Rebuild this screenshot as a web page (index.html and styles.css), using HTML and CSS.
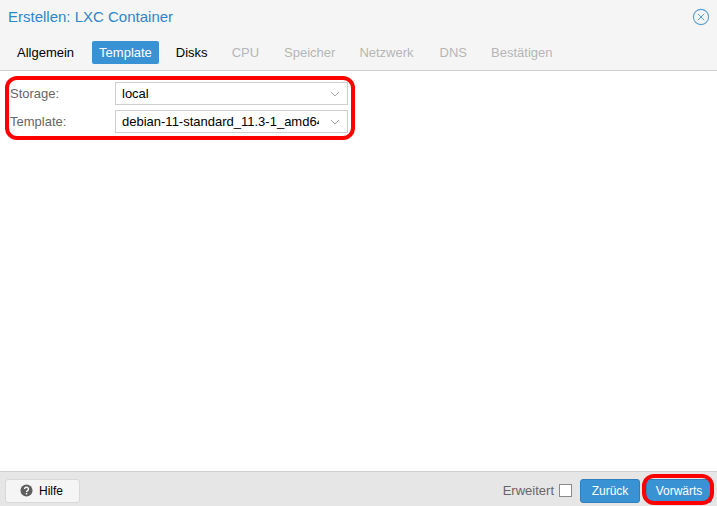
FILE: index.html
```html
<!DOCTYPE html>
<html lang="de">
<head>
<meta charset="utf-8">
<title>Erstellen: LXC Container</title>
<link rel="stylesheet" href="styles.css">
</head>
<body>
<div class="window">
  <header class="head">
    <div class="titlebar">
      <h1 class="title">Erstellen: LXC Container</h1>
      <svg class="close" viewBox="0 0 18 18" width="18" height="18" aria-hidden="true">
        <circle cx="9" cy="9" r="7.6" fill="none" stroke="#5a9fd4" stroke-width="1.1"/>
        <path d="M5.8 5.8l6.4 6.4M12.2 5.8l-6.4 6.4" fill="none" stroke="#5a9fd4" stroke-width="1"/>
      </svg>
    </div>
    <nav class="tabs">
      <span class="tab tab-first">Allgemein</span>
      <span class="tab tab-active">Template</span>
      <span class="tab">Disks</span>
      <span class="tab tab-off tab-cpu">CPU</span>
      <span class="tab tab-off">Speicher</span>
      <span class="tab tab-off tab-net">Netzwerk</span>
      <span class="tab tab-off">DNS</span>
      <span class="tab tab-off">Bestätigen</span>
    </nav>
  </header>
  <main class="content">
    <div class="row">
      <label class="label">Storage:</label>
      <div class="combo"><span class="value">local</span><svg class="chev" viewBox="0 0 10 6" width="10" height="6" aria-hidden="true"><path d="M1 1l4 4 4-4" fill="none" stroke="#a8a8a8" stroke-width="1"/></svg></div>
    </div>
    <div class="row">
      <label class="label">Template:</label>
      <div class="combo"><span class="value">debian-11-standard_11.3-1_amd64.tar.zst</span><svg class="chev" viewBox="0 0 10 6" width="10" height="6" aria-hidden="true"><path d="M1 1l4 4 4-4" fill="none" stroke="#a8a8a8" stroke-width="1"/></svg></div>
    </div>
    <div class="mark mark-form"></div>
  </main>
  <footer class="foot">
    <button class="btn btn-help">
      <svg viewBox="0 0 14 14" width="13" height="13" aria-hidden="true"><circle cx="7" cy="7" r="6.5" fill="#5f5f5f"/><path d="M4.9 5.4a2.1 2 0 1 1 3.2 1.7c-.8.5-1.1.8-1.1 1.5" fill="none" stroke="#fff" stroke-width="1.5"/><rect x="6.2" y="9.6" width="1.6" height="1.6" fill="#fff"/></svg>
      Hilfe
    </button>
    <span class="spacer"></span>
    <span class="adv">Erweitert</span>
    <span class="check"></span>
    <button class="btn btn-primary btn-back">Zurück</button>
    <button class="btn btn-primary btn-next">Vorwärts</button>
    <div class="mark mark-next"></div>
  </footer>
</div>
</body>
</html>
```
FILE: styles.css
```css
* { box-sizing: border-box; }
html, body { margin: 0; height: 100%; }
body { font-family: "Liberation Sans", Arial, sans-serif; font-size: 13px; color: #000; background: #fff; }
.window { width: 717px; height: 506px; display: flex; flex-direction: column; overflow: hidden; }
.head { height: 71px; background: #f5f5f5; border-bottom: 1px solid #cfcfcf; flex: none; }
.titlebar { height: 41px; padding: 8px 7px 0 8px; display: flex; justify-content: space-between; align-items: flex-start; }
.title { margin: 0; font-size: 15px; font-weight: 400; line-height: 18px; color: #2f86c9; }
.tabs { display: flex; padding-left: 10px; }
.tab { height: 23px; line-height: 23px; padding: 0 7px; border-radius: 2px; margin-right: 10px; white-space: nowrap; }
.tab-first { margin-right: 11px; }
.tab-active { background: #3892d4; color: #fff; }
.tab-off { color: #b5b5b5; }
.tab-cpu { margin-right: 11px; }
.tab-net { margin-right: 12px; }
.content { flex: 1; position: relative; background: #fff; padding: 11px 369px 0 10px; }
.row { display: flex; align-items: center; height: 23px; margin-bottom: 5px; }
.label { width: 105px; flex: none; color: #666; }
.combo { width: 233px; height: 23px; border: 1px solid #cfcfcf; background: #fff; display: flex; align-items: center; padding-left: 6px; padding-right: 7px; }
.value { flex: 1; min-width: 0; overflow: hidden; white-space: nowrap; margin-right: 11px; }
.chev { flex: none; }
.mark { position: absolute; border: 4px solid #f00; pointer-events: none; }
.mark-form { left: 5px; top: 5px; width: 350px; height: 64px; border-radius: 12px; }
.foot { height: 35px; flex: none; position: relative; background: #e6e6e6; border-top: 1px solid #cfcfcf; display: flex; align-items: center; padding: 3px 5px 0 5px; }
.spacer { flex: 1; }
.btn { font: inherit; font-size: 12px; height: 24px; border-radius: 3px; padding: 0; cursor: pointer; }
.btn-help { width: 75px; display: flex; align-items: center; gap: 6px; padding-left: 14px; background: #f5f5f5; border: 1px solid #d8d8d8; color: #000; }
.btn-primary { background: #3892d4; border: 1px solid #2f7fbc; color: #fff; }
.btn-back { width: 60px; margin-left: 8px; }
.btn-next { width: 66px; margin-left: 6px; }
.adv { color: #666; }
.check { width: 13px; height: 13px; margin-left: 5px; background: #fff; border: 1px solid #8a8a8a; }
.mark-next { left: 642px; top: 2px; width: 72px; height: 31px; border-radius: 12px; }
```
